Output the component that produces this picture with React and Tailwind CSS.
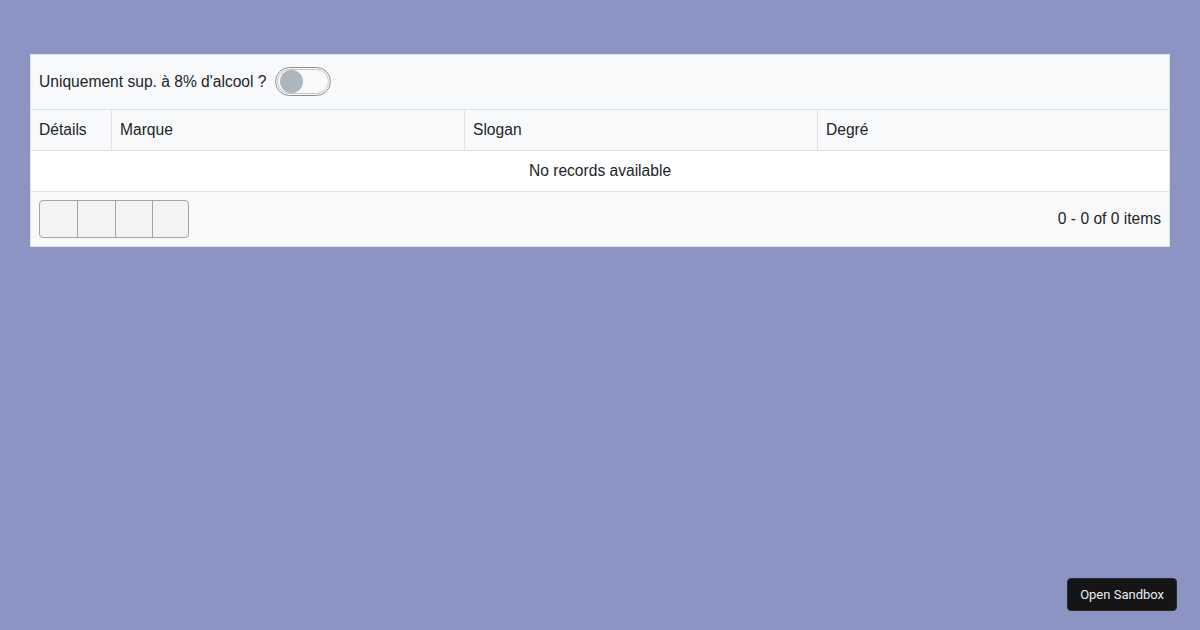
export default function App() {
  const cols = [
    { label: 'Détails', w: 'w-[80px]' },
    { label: 'Marque', w: 'w-[353px]' },
    { label: 'Slogan', w: 'w-[353px]' },
    { label: 'Degré', w: 'flex-1' },
  ]

  return (
    <div className="w-[1200px] h-[630px] bg-[#8c94c4] relative font-['Liberation_Sans',Arial,sans-serif] text-[#212529] text-[15.6px]">
      <div className="pt-[54px] px-[30px]">
        <div className="border border-[#dee2e6] bg-[#f8f9fa]">
          {/* toolbar */}
          <div className="h-[55px] flex items-center px-2 gap-2 border-b border-[#dee2e6]">
            <span>Uniquement sup. à 8% d'alcool ?</span>
            <div className="w-[56px] h-[29px] -mt-px rounded-full border border-[#8f8f8f] outline outline-1 outline-[#c4c4c4] outline-offset-[-3px] bg-[#f8f9fa] flex items-center pl-[4px]">
              <div className="w-[23px] h-[23px] rounded-full bg-[#adb5bd]" />
            </div>
          </div>

          {/* header */}
          <div className="h-[41px] flex border-b border-[#dee2e6]">
            {cols.map((c, i) => (
              <div
                key={c.label}
                className={`${c.w} flex items-center px-2 ${i > 0 ? 'border-l border-[#dee2e6]' : ''}`}
              >
                {c.label}
              </div>
            ))}
          </div>

          {/* empty row */}
          <div className="h-[41px] bg-white flex items-center justify-center border-b border-[#dee2e6]">
            No records available
          </div>

          {/* pager */}
          <div className="h-[54px] flex items-center justify-between px-2">
            <div className="flex h-[38px] rounded-[4px] border border-[#a3a3a3] overflow-hidden bg-[#f2f3f3]">
              <div className="w-[37px] h-full" />
              <div className="w-[38px] h-full border-l border-[#a3a3a3]" />
              <div className="w-[37px] h-full border-l border-[#a3a3a3]" />
              <div className="w-[36px] h-full border-l border-[#a3a3a3]" />
            </div>
            <span>0 - 0 of 0 items</span>
          </div>
        </div>
      </div>

      <button className="absolute right-[23px] bottom-[19px] h-[33px] px-[12px] rounded-[4px] bg-[#151515] border border-[#2a2a2a] text-[13px] text-[#e8eef8] font-['Roboto',sans-serif]">
        Open Sandbox
      </button>
    </div>
  )
}
